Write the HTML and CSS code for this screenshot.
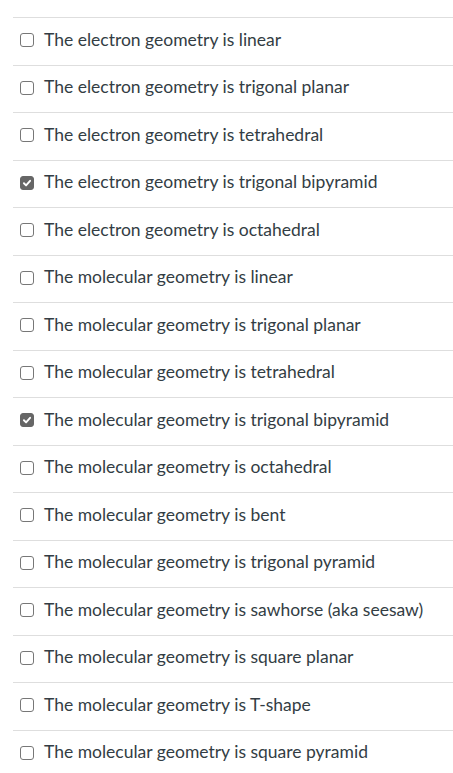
FILE: index.html
```html
<!DOCTYPE html>
<html>
<head>
<meta charset="utf-8">
<link rel="stylesheet" href="styles.css">
</head>
<body>
<ul class="answers">
  <li class="answer"><span class="box"></span><span class="label">The electron geometry is linear</span></li>
  <li class="answer"><span class="box"></span><span class="label">The electron geometry is trigonal planar</span></li>
  <li class="answer"><span class="box"></span><span class="label">The electron geometry is tetrahedral</span></li>
  <li class="answer"><span class="box checked"><svg viewBox="0 0 14 14" width="14" height="14"><path d="M3.4 7.3 L5.9 9.8 L10.6 4.4" fill="none" stroke="#fff" stroke-width="2.2" stroke-linecap="round" stroke-linejoin="round"/></svg></span><span class="label">The electron geometry is trigonal bipyramid</span></li>
  <li class="answer"><span class="box"></span><span class="label">The electron geometry is octahedral</span></li>
  <li class="answer"><span class="box"></span><span class="label">The molecular geometry is linear</span></li>
  <li class="answer"><span class="box"></span><span class="label">The molecular geometry is trigonal planar</span></li>
  <li class="answer"><span class="box"></span><span class="label">The molecular geometry is tetrahedral</span></li>
  <li class="answer"><span class="box checked"><svg viewBox="0 0 14 14" width="14" height="14"><path d="M3.4 7.3 L5.9 9.8 L10.6 4.4" fill="none" stroke="#fff" stroke-width="2.2" stroke-linecap="round" stroke-linejoin="round"/></svg></span><span class="label">The molecular geometry is trigonal bipyramid</span></li>
  <li class="answer"><span class="box"></span><span class="label">The molecular geometry is octahedral</span></li>
  <li class="answer"><span class="box"></span><span class="label">The molecular geometry is bent</span></li>
  <li class="answer"><span class="box"></span><span class="label">The molecular geometry is trigonal pyramid</span></li>
  <li class="answer"><span class="box"></span><span class="label">The molecular geometry is sawhorse (aka seesaw)</span></li>
  <li class="answer"><span class="box"></span><span class="label">The molecular geometry is square planar</span></li>
  <li class="answer"><span class="box"></span><span class="label">The molecular geometry is T-shape</span></li>
  <li class="answer"><span class="box"></span><span class="label">The molecular geometry is square pyramid</span></li>
</ul>
</body>
</html>
```

FILE: styles.css
```css
html, body {
  margin: 0;
  padding: 0;
  background: #fff;
}
body {
  font-family: Lato, "Liberation Sans", sans-serif;
  color: #333d44;
  padding: 17px 0 0 13px;
}
.answers {
  list-style: none;
  margin: 0;
  padding: 0;
}
.answer {
  display: flex;
  align-items: center;
  height: 46.5px;
  border-top: 1px solid #dedede;
  padding-left: 7px;
  font-size: 17.5px;
}
.box {
  width: 14px;
  height: 14px;
  box-sizing: border-box;
  border: 1px solid #777;
  border-radius: 3px;
  margin-right: 10px;
  margin-bottom: 2px;
  flex: none;
  display: flex;
  align-items: center;
  justify-content: center;
}
.box.checked {
  background: #666;
  border-color: #666;
}
.box.checked svg {
  display: block;
}
.label {
  white-space: nowrap;
  line-height: 1;
  padding-bottom: 4px;
}
```
